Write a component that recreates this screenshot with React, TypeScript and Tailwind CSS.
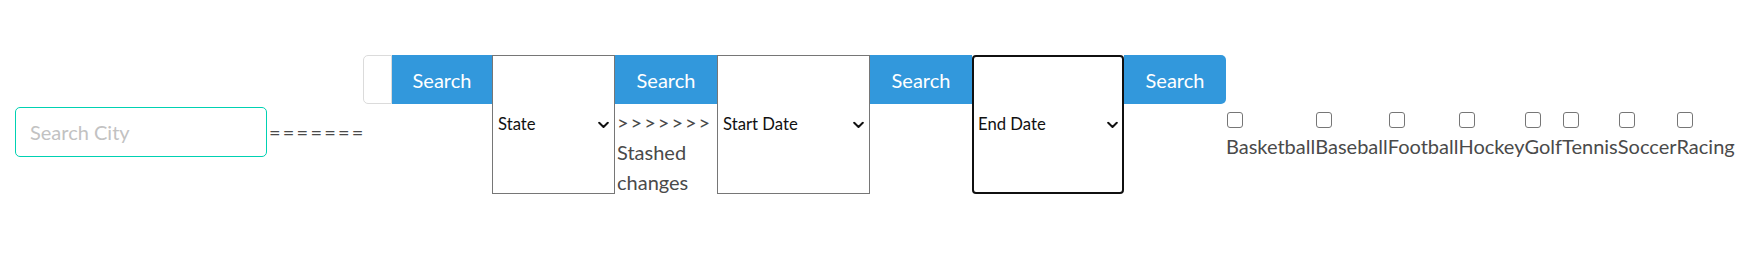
import { useState } from "react";

const SPORTS = ["Basketball", "Baseball", "Football", "Hockey", "Golf", "Tennis", "Soccer", "Racing"];

const font = "font-['Segoe_UI','Lato',sans-serif]";

function Chevron() {
  return (
    <svg
      className="pointer-events-none absolute right-[6px] top-1/2 -translate-y-1/2"
      width="11"
      height="7"
      viewBox="0 0 11 7"
      fill="none"
    >
      <path d="M1.2 1.2 L5.5 5.5 L9.8 1.2" stroke="#111" strokeWidth="2" strokeLinecap="round" strokeLinejoin="round" />
    </svg>
  );
}

function Select({
  label,
  width,
  focused,
}: {
  label: string;
  width: string;
  focused?: boolean;
}) {
  return (
    <div className={`relative h-[139px] shrink-0 ${width}`}>
      <select
        defaultValue=""
        className={
          focused
            ? "h-full w-full appearance-none rounded-[4px] border-2 border-[#101010] bg-white pl-[4px] text-[16.7px] text-[#111] outline-none"
            : "h-full w-full appearance-none border border-[#767676] bg-white pl-[5px] text-[16.7px] text-[#111] outline-none"
        }
      >
        <option value="">{label}</option>
      </select>
      <Chevron />
    </div>
  );
}

function SearchButton({ last, width = "w-[102px]" }: { last?: boolean; width?: string }) {
  return (
    <button
      className={`h-[49px] shrink-0 bg-[#3298dc] text-[20px] text-white ${width} ${
        last ? "rounded-r-[5px]" : ""
      }`}
    >
      Search
    </button>
  );
}

export default function App() {
  const [city, setCity] = useState("");
  const [checked, setChecked] = useState<string[]>([]);

  function toggle(s: string) {
    setChecked((c) => (c.includes(s) ? c.filter((x) => x !== s) : [...c, s]));
  }

  return (
    <div className={`flex h-[264px] w-full items-start bg-white pl-[15px] text-[#4a4a4a] ${font}`}>
      <input
        value={city}
        onChange={(e) => setCity(e.target.value)}
        placeholder="Search City"
        className="mt-[107px] h-[50px] w-[252px] shrink-0 rounded-[5px] border border-[#00d1b2] bg-white px-[14px] text-[20px] text-[#363636] outline-none placeholder:text-[#c2c2c2]"
      />
      <span className="mt-[117px] w-[96px] shrink-0 pl-[2px] text-[20px] leading-[30px] tracking-[2.2px]">=======</span>

      <div className="mt-[55px] flex shrink-0 items-start">
        <input className="h-[49px] w-[29px] shrink-0 rounded-l-[5px] border border-[#dbdbdb] bg-white" />
        <SearchButton width="w-[100px]" />
        <Select label="State" width="w-[123px]" />
        <div className="flex w-[102px] shrink-0 flex-col">
          <SearchButton />
          <p className="pt-[3px] pl-[2px] text-[20px] leading-[30px]">
            <span className="tracking-[2px]">&gt;&gt;&gt;&gt;&gt;&gt;&gt;</span> Stashed changes
          </p>
        </div>
        <Select label="Start Date" width="w-[153px]" />
        <SearchButton />
        <Select label="End Date" width="w-[152px]" focused />
        <SearchButton last />
      </div>

      <div className="mt-[112px] flex shrink-0 items-start">
        {SPORTS.map((s) => (
          <label key={s} className="flex flex-col items-start">
            <input
              type="checkbox"
              checked={checked.includes(s)}
              onChange={() => toggle(s)}
              className="ml-[1px] h-[16px] w-[16px] appearance-none rounded-[3px] border border-[#767676] bg-white checked:bg-[#3298dc]"
            />
            <span className="mt-[3px] text-[20px] leading-[30px]">{s}</span>
          </label>
        ))}
      </div>
    </div>
  );
}
